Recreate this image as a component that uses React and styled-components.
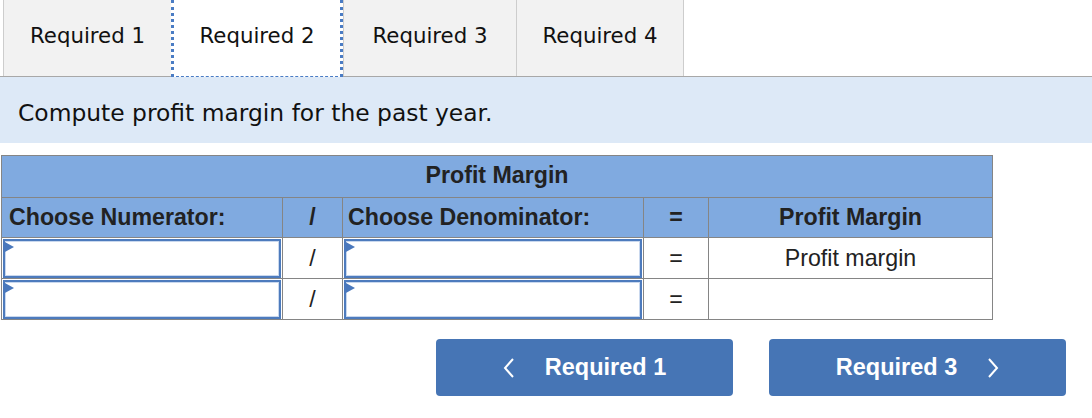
import React from 'react'
import styled, { createGlobalStyle } from "styled-components"

const tabs = ["Required 1", "Required 2", "Required 3", "Required 4"]
const tabWidths = [168, 172, 173, 168]

function App() {
    return (
        <>
            <GlobalStyle />
            <Page>
                <TabBar>
                    {tabs.map((t, i) => (
                        <Tab key={t} $active={i === 1} $width={tabWidths[i]} $last={i === tabs.length - 1}>
                            {t}
                        </Tab>
                    ))}
                </TabBar>
                <Prompt>Compute profit margin for the past year.</Prompt>

                <Table>
                    <colgroup>
                        <col style={{ width: 281 }} />
                        <col style={{ width: 60 }} />
                        <col style={{ width: 301 }} />
                        <col style={{ width: 65 }} />
                        <col />
                    </colgroup>
                    <thead>
                        <TitleRow>
                            <th colSpan={5}>Profit Margin</th>
                        </TitleRow>
                        <HeadRow>
                            <HeadCell $align="left">Choose Numerator:</HeadCell>
                            <HeadCell>/</HeadCell>
                            <HeadCell $align="left" $pad={5}>Choose Denominator:</HeadCell>
                            <HeadCell>=</HeadCell>
                            <HeadCell>Profit Margin</HeadCell>
                        </HeadRow>
                    </thead>
                    <tbody>
                        {["Profit margin", ""].map((result, i) => (
                            <BodyRow key={i}>
                                <InputCell><Field /></InputCell>
                                <Cell>/</Cell>
                                <InputCell><Field /></InputCell>
                                <Cell>=</Cell>
                                <Cell>{result}</Cell>
                            </BodyRow>
                        ))}
                    </tbody>
                </Table>

                <NavRow>
                    <NavButton>
                        <Chevron dir="left" />
                        Required 1
                    </NavButton>
                    <NavButton>
                        Required 3
                        <Chevron dir="right" />
                    </NavButton>
                </NavRow>
            </Page>
        </>
    )
}

function Field() {
    return (
        <FieldBox>
            <Marker />
        </FieldBox>
    )
}

function Chevron({ dir }) {
    const pts = dir === "left" ? "10,1 2,10 10,19" : "2,1 10,10 2,19"
    return (
        <svg width="12" height="20" viewBox="0 0 12 20">
            <polyline points={pts} fill="none" stroke="#fff" strokeWidth="2" />
        </svg>
    )
}

export default App

const GlobalStyle = createGlobalStyle`
    body{
        margin: 0;
        background: #fff;
        font-family: "Liberation Sans", Arial, sans-serif;
    }
`

const Page = styled.div`
    width: 1092px;
    height: 418px;
    overflow: hidden;
`

const TabBar = styled.div`
    display: flex;
    height: 76px;
    padding-left: 3px;
    border-bottom: 1px solid #a8a8a8;
`

const Tab = styled.div`
    width: ${p => p.$width}px;
    box-sizing: border-box;
    display: flex;
    align-items: center;
    justify-content: center;
    padding-bottom: 5px;
    font-family: "DejaVu Sans", Verdana, sans-serif;
    font-size: 21.3px;
    color: #111;
    background: ${p => p.$active ? "#fff" : "#f2f2f2"};
    border-left: ${p => p.$active ? "3px dotted #4a7cc4" : "1px solid #cdcdcd"};
    border-right: ${p => p.$active ? "3px dotted #4a7cc4" : p.$last ? "1px solid #cdcdcd" : "none"};
    border-bottom: ${p => p.$active ? "1px dashed #4a7cc4" : "none"};
    margin-bottom: ${p => p.$active ? "-1px" : "0"};
`

const Prompt = styled.div`
    height: 66px;
    box-sizing: border-box;
    display: flex;
    align-items: center;
    padding: 5px 0 0 18px;
    background: #dde9f7;
    font-family: "DejaVu Sans", Verdana, sans-serif;
    font-size: 23.4px;
    color: #111;
`

const Table = styled.table`
    margin: 12px 0 0 1px;
    width: 992px;
    border-collapse: collapse;
    table-layout: fixed;
    font-size: 23.2px;
    color: #222;
    td, th{
        border: 1px solid #858585;
        padding: 0;
    }
`

const TitleRow = styled.tr`
    height: 42px;
    background: #80aae0;
    th{
        font-weight: bold;
        text-align: center;
        padding-bottom: 2px;
    }
`

const HeadRow = styled.tr`
    height: 40px;
    background: #80aae0;
`

const HeadCell = styled.th`
    text-align: ${p => p.$align || "center"};
    padding-left: ${p => p.$pad ?? (p.$align ? 7 : 0)}px !important;
    font-weight: bold;
`

const BodyRow = styled.tr`
    height: 41px;
`

const Cell = styled.td`
    text-align: center;
`

const InputCell = styled.td`
    vertical-align: top;
`

const FieldBox = styled.div`
    position: relative;
    height: 39px;
    margin: 1px 1px 0 1px;
    box-sizing: border-box;
    border: 2px solid #4d7bbd;
    box-shadow: inset 0 0 0 1px #c9d8ee;
    background: #fff;
`

const Marker = styled.span`
    position: absolute;
    left: -2px;
    top: 0;
    width: 0;
    height: 0;
    border-top: 6px solid transparent;
    border-bottom: 6px solid transparent;
    border-left: 11px solid #4a78bc;
`

const NavRow = styled.div`
    display: flex;
    justify-content: flex-end;
    gap: 36px;
    margin-top: 19px;
    padding-right: 26px;
`

const NavButton = styled.button`
    width: 297px;
    height: 57px;
    display: flex;
    align-items: center;
    justify-content: center;
    gap: 30px;
    border: none;
    border-radius: 4px;
    background: #4675b5;
    color: #fff;
    font-family: "Liberation Sans", Arial, sans-serif;
    font-size: 23.5px;
    font-weight: bold;
    padding: 0;
`
